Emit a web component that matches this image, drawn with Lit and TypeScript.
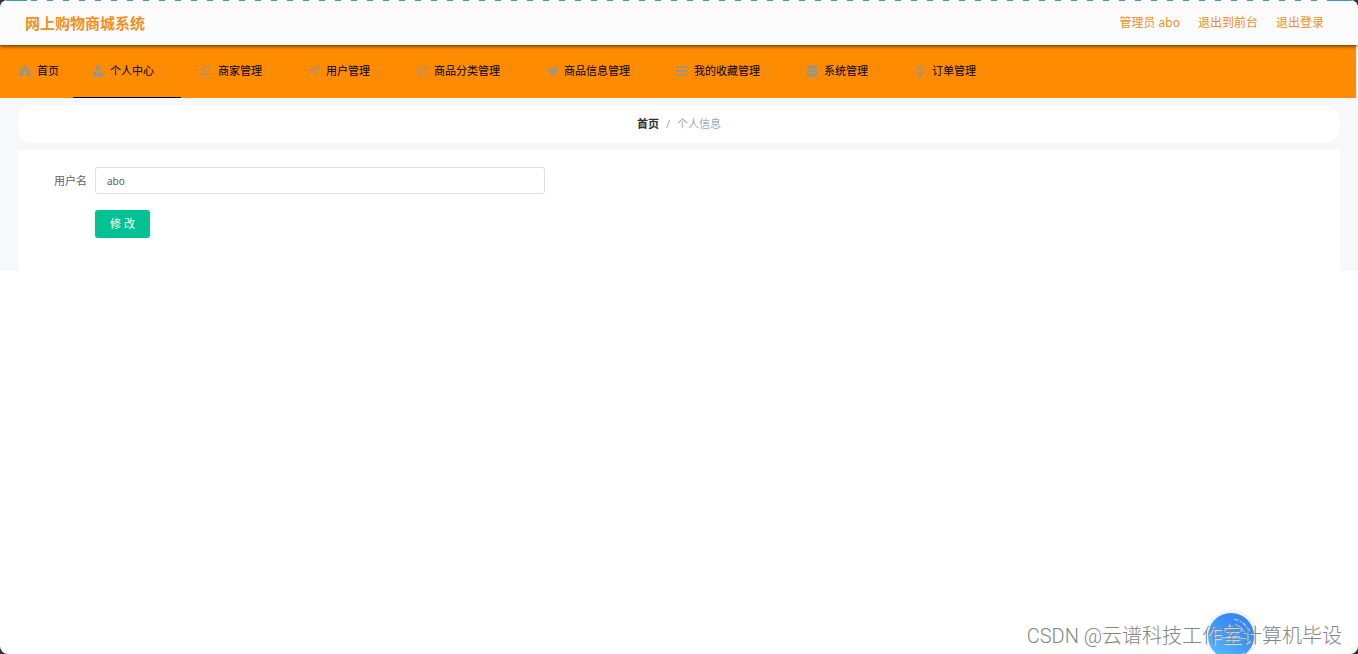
import { LitElement, html, css, svg, nothing } from "lit";
import { customElement, state } from "lit/decorators.js";

const icons: Record<string, unknown> = {
  home: svg`<path fill="currentColor" stroke="none" d="M6 .4 11.6 5.4v6H7.8V8a1.8 1.8 0 0 0-3.6 0v3.4H.4v-6z"/>`,
  user: svg`<circle cx="6" cy="3.3" r="2.9" fill="currentColor" stroke="none"/><path fill="currentColor" stroke="none" d="M.4 11.6V9.8C.4 8.2 1.6 7.2 3.2 7.2h5.6c1.6 0 2.8 1 2.8 2.6v1.8z"/>`,
  bell: svg`<path d="M2.5 9.5V5a3.5 3.5 0 0 1 7 0v4.5M.5 9.5h11M6 .4v1.2M5 11.4h2M1.2 11 10.8.8"/>`,
  position: svg`<path d="M.6 5.2 11.3.7 7.4 11.3 6 6.3zM6 6.3l5.3-5.6"/>`,
  discover: svg`<circle cx="6" cy="6" r="5.4"/><path d="m8.2 3-1.3 3.8-3 2.2 1.3-3.8z"/>`,
  promotion: svg`<path fill="currentColor" stroke="none" d="M.1 6.2 11.9.4 9.8 11 6.4 8.9l-1.8 2.9-.4-4 5-4.8-5.8 4.4z"/>`,
  fold: svg`<path fill="currentColor" stroke="none" d="M.3 1h11.4v2H.3zm0 4h7v2h-7zm0 4h11.4v2H.3zM8.6 4l2.8 2-2.8 2z"/>`,
  order: svg`<path fill="currentColor" stroke="none" fill-rule="evenodd" d="M4 0h4v1h3v11H1V1h3zM3 4v1h6V4zm0 3v1h6V7z"/>`,
  mic: svg`<rect x="3.5" y=".5" width="5" height="7.4" rx="2.4"/><path d="M2 4.5v2.5a3 3 0 0 0 3 2.5h2a3 3 0 0 0 3-2.5V4.5M6 9.5v2M3 11.5h6M4 3h4M4 5h4"/>`,
};

const menu = [
  { icon: "home", label: "首页", leaf: true },
  { icon: "user", label: "个人中心" },
  { icon: "bell", label: "商家管理" },
  { icon: "position", label: "用户管理" },
  { icon: "discover", label: "商品分类管理" },
  { icon: "promotion", label: "商品信息管理" },
  { icon: "fold", label: "我的收藏管理" },
  { icon: "order", label: "系统管理" },
  { icon: "mic", label: "订单管理" },
];

@customElement("app-root")
export class AppRoot extends LitElement {
  @state() private active = "个人中心";

  static styles = css`
    :host {
      display: block;
      background: #333;
      font-family: "Noto Sans", "Noto Sans CJK SC", sans-serif;
      font-size: 11px;
      line-height: 16px;
    }
    * { box-sizing: border-box; }
    a { color: inherit; text-decoration: none; }
    .page {
      position: relative;
      min-height: 100vh;
      background: #fff;
      border-radius: 8px;
      overflow: hidden;
    }
    .edge {
      position: absolute;
      inset: 0 0 auto;
      height: 1px;
      z-index: 3;
      background:
        linear-gradient(#3b94cc, #3b94cc) left / 27px 1px no-repeat,
        linear-gradient(#3b94cc, #3b94cc) right / 31px 1px no-repeat,
        repeating-linear-gradient(90deg, #3b94cc 0 5px, #fff 5px 15px, #3b94cc 15px 16px);
    }
    .top {
      position: relative;
      z-index: 2;
      display: flex;
      align-items: center;
      justify-content: space-between;
      height: 45px;
      padding: 0 34px 0 25px;
      background: #fcfcfc;
      box-shadow: 0 1px 4px rgba(0, 0, 0, 0.7);
      color: #f0901e;
    }
    .title { margin: 0; font-size: 15px; line-height: 20px; font-weight: 700; }
    .links { display: flex; gap: 18px; font-size: 12px; }
    .body { background: #f6f8fa; }
    .nav {
      display: flex;
      margin-right: 2px;
      background: #ff8c00;
      color: #000;
    }
    .item {
      display: flex;
      align-items: center;
      height: 53px;
      padding: 0 14px 0 19px;
      border-bottom: 1px solid transparent;
      white-space: nowrap;
    }
    .item.on { border-color: #000; }
    .icon {
      width: 12px;
      height: 12px;
      margin-right: 6px;
      fill: none;
      stroke: currentColor;
      stroke-width: 0.9;
      color: #9c9584;
    }
    .arrow {
      width: 8px;
      height: 8px;
      margin-left: 5px;
      fill: none;
      stroke: #b8934f;
      stroke-width: 0.9;
    }
    .content { padding: 7px 18px 0; }
    .crumb {
      display: flex;
      align-items: center;
      justify-content: center;
      gap: 7px;
      height: 38px;
      margin-bottom: 7px;
      border-radius: 16px;
      background: #fff;
      color: #97a8be;
    }
    .crumb a { color: #303133; font-weight: 700; }
    .card { padding: 17px 36px 33px; background: #fff; }
    .row {
      display: grid;
      grid-template-columns: 32px minmax(0, 450px);
      column-gap: 9px;
      align-items: center;
      margin-bottom: 16px;
      color: #606266;
    }
    .row:last-child { margin-bottom: 0; }
    .row label { white-space: nowrap; }
    input {
      height: 27px;
      padding: 0 11px;
      border: 1px solid #dcdfe0;
      border-radius: 3px;
      background: #fff;
      color: #606266;
      font: inherit;
      font-size: 10px;
      outline: none;
    }
    button {
      grid-column: 2;
      justify-self: start;
      height: 28px;
      width: 55px;
      padding: 0;
      border: 0;
      border-radius: 3px;
      background: #00c292;
      color: #fff;
      font: inherit;
    }
    .bubble {
      position: absolute;
      right: 102px;
      bottom: -7px;
      width: 50px;
      height: 50px;
      border: 2px solid #eef5fb;
      border-radius: 50%;
      background: linear-gradient(35deg, #5cc4ff, #3d8ff8 60%, #347ef0);
      box-shadow: 0 0 3px rgba(60, 120, 180, 0.25);
    }
    .bubble svg { display: block; width: 100%; height: 100%; }
    .mark {
      position: absolute;
      right: 16px;
      bottom: 4px;
      color: #858585;
      font-family: Roboto, "Noto Sans CJK SC", sans-serif;
      font-size: 20px;
      font-weight: 300;
      line-height: 28px;
      text-shadow: 1px 1px 1px rgba(255, 255, 255, 0.8);
    }
  `;

  render() {
    return html`
      <div class="page">
        <div class="edge"></div>
        <header class="top">
          <h1 class="title">网上购物商城系统</h1>
          <div class="links">
            <span>管理员 abo</span>
            <a href="#front">退出到前台</a>
            <a href="#logout">退出登录</a>
          </div>
        </header>
        <div class="body">
          <nav class="nav">
            ${menu.map(
              (m) => html`<a
                href="#"
                class="item ${m.label === this.active ? "on" : ""}"
                @click=${() => (this.active = m.label)}
                ><svg class="icon" viewBox="0 0 12 12" aria-hidden="true">${icons[m.icon]}</svg
                ><span>${m.label}</span>${m.leaf
                  ? nothing
                  : html`<svg class="arrow" viewBox="0 0 8 8" aria-hidden="true">
                      <path d="m.6 2.2 3.4 3.6 3.4-3.6" />
                    </svg>`}</a
              >`
            )}
          </nav>
          <main class="content">
            <nav class="crumb">
              <a href="#">首页</a><span>/</span><span>个人信息</span>
            </nav>
            <form class="card" @submit=${(e: Event) => e.preventDefault()}>
              <div class="row">
                <label for="name">用户名</label>
                <input id="name" type="text" value="abo" />
              </div>
              <div class="row"><button type="submit">修 改</button></div>
            </form>
          </main>
        </div>
        <div class="bubble">
          <svg viewBox="0 0 44 44" fill="none" stroke="#b9dcff" aria-hidden="true">
            <path d="M25 6q10 2 14 11" stroke-dasharray="4 2 2 1" />
            <path d="M26 11q7 2 9 8M6 25q16-3 32 0M24 42q7-1 11-4" stroke-width=".8" />
            <path d="m20 10 3 4-3 1z" fill="#b9dcff" stroke="none" />
          </svg>
        </div>
        <div class="mark">CSDN @云谱科技工作室计算机毕设</div>
      </div>
    `;
  }
}
